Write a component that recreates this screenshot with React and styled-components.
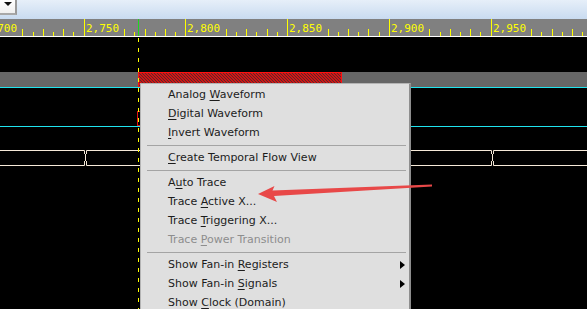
import styled, { createGlobalStyle } from 'styled-components'

const GlobalStyle = createGlobalStyle`
    html, body {
        margin: 0;
        padding: 0;
        background: #000;
        overflow: hidden;
    }
`

const Screen = styled.div`
    position: relative;
    width: 587px;
    height: 309px;
    display: flex;
    flex-direction: column;
    background: #000;
    overflow: hidden;
    font-family: "DejaVu Sans", "Liberation Sans", sans-serif;
`

const TopBar = styled.div`
    height: 19px;
    flex: none;
    display: flex;
    align-items: flex-start;
    background: linear-gradient(#e6eff9, #c9dbf0);
`

const DropButton = styled.div`
    width: 15px;
    height: 11px;
    display: flex;
    justify-content: center;
    padding-top: 2px;
    background: linear-gradient(#ffffff, #f0f0f0);
    border-right: 2px solid #9a9a9a;
    border-bottom: 2px solid #a8a8a8;
`

const Ruler = styled.div`
    height: 17px;
    flex: none;
    background: #808080;
    border-bottom: 1px solid #ffffff;
    svg { display: block; }
`

const WaveArea = styled.div`
    flex: 1;
    background: #000;
    svg { display: block; }
`

const ContextMenu = styled.div`
    position: absolute;
    left: 140px;
    top: 83px;
    width: 268px;
    height: 240px;
    padding-top: 1px;
    background: #dfdfdf;
    border-left: 1px solid #b4b4b4;
    border-top: 1px solid #b4b4b4;
    border-right: 2px solid #8e8e8e;
    font-size: 11px;
`

const MenuItem = styled.div`
    height: 19px;
    display: flex;
    align-items: center;
    justify-content: space-between;
    padding: 0 4px 0 27px;
    color: ${({ $disabled }) => ($disabled ? '#8d8d8d' : '#1c1c1c')};
    white-space: nowrap;

    u {
        text-underline-offset: 2px;
    }
`

const Separator = styled.div`
    height: 6px;
    display: flex;
    align-items: center;
    padding: 0 3px 0 6px;

    &::after {
        content: '';
        flex: 1;
        height: 1px;
        background: #a4a4a4;
    }
`

const SubArrow = styled.span`
    width: 0;
    height: 0;
    border-top: 4.5px solid transparent;
    border-bottom: 4.5px solid transparent;
    border-left: 5px solid #000;
`

const Overlay = styled.svg`
    position: absolute;
    left: 0;
    top: 0;
    pointer-events: none;
`

const MAJOR0 = -18.25
const STEP = 101.75
const labels = ['2,700', '2,750', '2,800', '2,850', '2,900', '2,950']

function RulerDrawing() {
    const ticks = []
    labels.forEach((label, k) => {
        const x = Math.round(MAJOR0 + STEP * k) + 0.5
        ticks.push(<line key={`m${k}`} x1={x} x2={x} y1={19} y2={36} stroke="#ffff00" />)
        ticks.push(
            <text key={`t${k}`} x={x + 1.5} y={32} fill="#ffff00" fontSize="11"
                fontFamily='"DejaVu Sans Mono", "Liberation Mono", monospace'>{label}</text>
        )
        for (let i = 4; i < 10; i++) {
            const mx = Math.round(MAJOR0 + STEP * k + (STEP / 10) * i) + 0.5
            ticks.push(<line key={`n${k}-${i}`} x1={mx} x2={mx} y1={i % 2 === 0 ? 29 : 32} y2={36} stroke="#ffff00" />)
        }
    })
    return (
        <svg width="587" height="17" viewBox="0 19 587 17">
            {ticks}
            <line x1={138.5} x2={138.5} y1={19} y2={36} stroke="#1ed81e" />
        </svg>
    )
}

function WaveDrawing() {
    const bus = '#f6e9d8'
    return (
        <svg width="587" height="272" viewBox="0 37 587 272">
            <defs>
                <pattern id="hatch" width="3" height="3" patternUnits="userSpaceOnUse">
                    <rect width="3" height="3" fill="#d01414" />
                    <path d="M0 0 L3 3" stroke="#5a2a2a" strokeWidth="1" />
                </pattern>
            </defs>
            <rect x={0} y={72} width={587} height={15} fill="#666666" />
            <rect x={138.5} y={72.5} width={203} height={14} fill="url(#hatch)" stroke="#ff1010" />
            <line x1={0} x2={587} y1={87.5} y2={87.5} stroke="#20e4ee" />
            <line x1={0} x2={587} y1={126.5} y2={126.5} stroke="#20e4ee" />
            <rect x={137.5} y={111.5} width={6} height={14} fill="none" stroke="#e01010" />
            <g stroke={bus} fill="none">
                <path d="M0 150.5 H84.5 V154 M86.5 154 V150.5 H491.5 V154 M493.5 154 V150.5 H587" />
                <path d="M0 165.5 H84.5 V161 M86.5 161 V165.5 H491.5 V161 M493.5 161 V165.5 H587" />
                <path d="M85.5 154 V161 M492.5 154 V161" />
            </g>
            <line x1={138.5} x2={138.5} y1={38} y2={309} stroke="#ffff00" strokeDasharray="4 6" />
        </svg>
    )
}

const items = [
    { pre: 'Analog ', key: 'W', post: 'aveform' },
    { pre: '', key: 'D', post: 'igital Waveform' },
    { pre: '', key: 'I', post: 'nvert Waveform' },
    'sep',
    { pre: '', key: 'C', post: 'reate Temporal Flow View' },
    'sep',
    { pre: 'A', key: 'u', post: 'to Trace' },
    { pre: 'Trace ', key: 'A', post: 'ctive X...' },
    { pre: 'Trace ', key: 'T', post: 'riggering X...' },
    { pre: 'Trace ', key: 'P', post: 'ower Transition', disabled: true },
    'sep',
    { pre: 'Show Fan-in ', key: 'R', post: 'egisters', sub: true },
    { pre: 'Show Fan-in ', key: 'S', post: 'ignals', sub: true },
    { pre: 'Show ', key: 'C', post: 'lock (Domain)' },
]

export default function App() {
    return (
        <>
            <GlobalStyle />
            <Screen>
                <TopBar>
                    <DropButton>
                        <svg width="8" height="4" viewBox="0 0 8 4">
                            <path d="M0 0 H8 L4 4 Z" fill="#111" />
                        </svg>
                    </DropButton>
                </TopBar>
                <Ruler>
                    <RulerDrawing />
                </Ruler>
                <WaveArea>
                    <WaveDrawing />
                </WaveArea>

                <ContextMenu>
                    {items.map((it, i) =>
                        it === 'sep' ? (
                            <Separator key={i} />
                        ) : (
                            <MenuItem key={i} $disabled={it.disabled}>
                                <span>{it.pre}<u>{it.key}</u>{it.post}</span>
                                {it.sub && <SubArrow />}
                            </MenuItem>
                        )
                    )}
                </ContextMenu>

                <Overlay width="587" height="309" viewBox="0 0 587 309">
                    <polygon
                        points="258,194 274.5,186 272.5,190.5 432,184.5 432,186.5 274,196 277,202"
                        fill="#e84848"
                    />
                </Overlay>
            </Screen>
        </>
    )
}
